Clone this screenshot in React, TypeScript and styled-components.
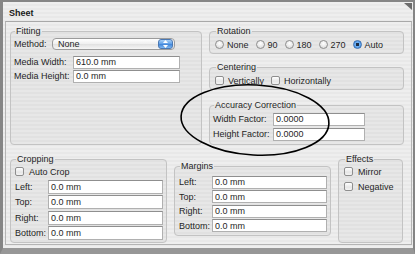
import React from 'react'
import styled, { createGlobalStyle } from 'styled-components'

const GlobalStyle = createGlobalStyle`
  html, body {
    margin: 0;
    padding: 0;
    background: #ffffff;
  }
  body {
    font-family: "Liberation Sans", Arial, sans-serif;
    font-size: 9px;
    color: #1f1f1f;
  }
  * { box-sizing: border-box; }
`

const stripes = `repeating-linear-gradient(to bottom, #eeeeee 0px, #eeeeee 2px, #e8e8e8 2px, #e8e8e8 4px)`

const App = () => {
  return (
    <>
      <GlobalStyle />
      <Window>
        <TitleBar>
          Sheet
          <Grip width="8" height="7" viewBox="0 0 8 7">
            <polygon points="0,0 8,0 8,7" fill="#6c6c6c" />
          </Grip>
        </TitleBar>
        <Panel>
          <TopRow>
            <Group $pad="1px 3px 3px 3px">
              <Caption>Fitting</Caption>
              <Row $h={12} $mb={6}>
                <FieldLabel $w={38}>Method:</FieldLabel>
                <Select>
                  <SelectText>None</SelectText>
                  <Stepper>
                    <svg width="5" height="8" viewBox="0 0 5 8">
                      <polygon points="2.5,0 5,3 0,3" fill="#ffffff" />
                      <polygon points="0,5 5,5 2.5,8" fill="#ffffff" />
                    </svg>
                  </Stepper>
                </Select>
              </Row>
              <Row $h={13} $mb={1}>
                <FieldLabel $w={59}>Media Width:</FieldLabel>
                <TextField $w={107}>610.0 mm</TextField>
              </Row>
              <Row $h={13}>
                <FieldLabel $w={59}>Media Height:</FieldLabel>
                <TextField $w={107}>0.0 mm</TextField>
              </Row>
            </Group>

            <RightCol>
              <Group $pad="2px 5px 2px 5px">
                <Caption>Rotation</Caption>
                <Row $h={12}>
                  <Choice><Radio />None</Choice>
                  <Choice><Radio />90</Choice>
                  <Choice><Radio />180</Choice>
                  <Choice><Radio />270</Choice>
                  <Choice><Radio $on />Auto</Choice>
                </Row>
              </Group>
              <Group $pad="2px 5px 2px 5px" $mt={8}>
                <Caption>Centering</Caption>
                <Row $h={12}>
                  <Choice $gap={4}><Box />Vertically</Choice>
                  <Choice $gap={4}><Box />Horizontally</Choice>
                </Row>
              </Group>
              <Group $pad="2px 3px 3px 3px" $mt={10}>
                <Caption>Accuracy Correction</Caption>
                <Row $h={13} $mb={2}>
                  <FieldLabel $w={60}>Width Factor:</FieldLabel>
                  <TextField $w={92}>0.0000</TextField>
                </Row>
                <Row $h={13}>
                  <FieldLabel $w={60}>Height Factor:</FieldLabel>
                  <TextField $w={92}>0.0000</TextField>
                </Row>
              </Group>
            </RightCol>
          </TopRow>

          <BottomRow>
            <Group $pad="2px 3px 2px 4px">
              <Caption>Cropping</Caption>
              <Row $h={10} $mb={3}>
                <Choice $gap={5}><Box />Auto Crop</Choice>
              </Row>
              {['Left:', 'Top:', 'Right:', 'Bottom:'].map((l, i) => (
                <Row key={l} $h={14} $mb={i < 3 ? 1.5 : 0}>
                  <FieldLabel $w={33}>{l}</FieldLabel>
                  <TextField $w={115}>0.0 mm</TextField>
                </Row>
              ))}
            </Group>

            <Group $pad="4px 3px 3px 4px">
              <Caption>Margins</Caption>
              {['Left:', 'Top:', 'Right:', 'Bottom:'].map((l, i) => (
                <Row key={l} $h={13} $mb={i < 3 ? 1.5 : 0}>
                  <FieldLabel $w={33}>{l}</FieldLabel>
                  <TextField $w={116}>0.0 mm</TextField>
                </Row>
              ))}
            </Group>

            <Group $pad="1px 3px 2px 5px" $stretch>
              <Caption>Effects</Caption>
              <Row $h={12} $mb={3}>
                <Choice $gap={5}><Box />Mirror</Choice>
              </Row>
              <Row $h={12}>
                <Choice $gap={5}><Box />Negative</Choice>
              </Row>
            </Group>
          </BottomRow>
        </Panel>

        <Callout width="415" height="257" viewBox="0 0 415 257">
          <ellipse
            cx="255"
            cy="120"
            rx="74"
            ry="35"
            transform="rotate(3 255 120)"
            fill="none"
            stroke="#000000"
            strokeWidth="1.6"
          />
        </Callout>
      </Window>
    </>
  )
}

export default App

const Callout = styled.svg`
    position: absolute;
    left: -3px;
    top: -2px;
    pointer-events: none;
`
const Box = styled.span`
    width: 9px;
    height: 9px;
    flex: none;
    border: 1px solid #8e8e8e;
    border-radius: 2px;
    background: linear-gradient(to bottom, #ffffff, #e6e6e6 60%, #f4f4f4);
`
const Radio = styled.span<{ $on?: boolean }>`
    width: 9px;
    height: 9px;
    flex: none;
    border-radius: 50%;
    border: 1px solid ${p => (p.$on ? '#3a6fb0' : '#8e8e8e')};
    background: ${p =>
      p.$on
        ? 'radial-gradient(circle at 50% 50%, #1b2c44 0 1.6px, #6fb0f2 2px, #3c86dc 100%)'
        : 'radial-gradient(circle at 50% 35%, #ffffff, #e2e2e2 70%, #cfcfcf)'};
`
const Choice = styled.label<{ $gap?: number }>`
    display: flex;
    align-items: center;
    gap: ${p => p.$gap ?? 3}px;
    margin-right: 7px;
    white-space: nowrap;
`
const Stepper = styled.span`
    width: 15px;
    height: 10px;
    margin-right: 1px;
    border-radius: 3px;
    display: flex;
    align-items: center;
    justify-content: center;
    background: linear-gradient(to bottom, #a9d0f7, #5b9de6 50%, #3c82d8 50%, #7fb8f0);
    border: 1px solid #4a78b3;
`
const SelectText = styled.span`
    flex: 1;
    padding-left: 5px;
`
const Select = styled.div`
    width: 123px;
    height: 12px;
    display: flex;
    align-items: center;
    border: 1px solid #9b9b9b;
    border-radius: 4px;
    background: linear-gradient(to bottom, #ffffff, #efefef 50%, #e0e0e0 50%, #f6f6f6);
`
const TextField = styled.div<{ $w: number }>`
    width: ${p => p.$w}px;
    height: 100%;
    display: flex;
    align-items: center;
    padding-left: 2px;
    background: #ffffff;
    border: 1px solid #b0b0b0;
    border-top-color: #8f8f8f;
`
const FieldLabel = styled.span<{ $w: number }>`
    width: ${p => p.$w}px;
    flex: none;
    white-space: nowrap;
`
const Row = styled.div<{ $h: number; $mb?: number }>`
    display: flex;
    align-items: center;
    height: ${p => p.$h}px;
    margin-bottom: ${p => p.$mb ?? 0}px;
`
const Caption = styled.legend`
    padding: 0 1px;
    margin-left: 1px;
    font-size: 9px;
    line-height: 11px;
    color: #262626;
`
const Group = styled.fieldset<{ $pad: string; $mt?: number; $stretch?: boolean }>`
    margin: ${p => p.$mt ?? 0}px 0 0 0;
    padding: ${p => p.$pad};
    min-width: 0;
    border: 1px solid #c3c3c3;
    border-radius: 4px;
    background: rgba(0, 0, 0, 0.028);
    align-self: ${p => (p.$stretch ? 'stretch' : 'auto')};
`
const BottomRow = styled.div`
    display: grid;
    grid-template-columns: 157px 157px 65px;
    column-gap: 7px;
    align-items: center;
    margin-top: 9px;
`
const RightCol = styled.div`
    display: flex;
    flex-direction: column;
`
const TopRow = styled.div`
    display: grid;
    grid-template-columns: 192px 195px;
    column-gap: 7px;
`
const Panel = styled.div`
    flex: 1;
    display: flex;
    flex-direction: column;
    border: 1px solid #b4b4b4;
    border-top-color: #a8a8a8;
    padding: 4px 7px 1px 4px;
`
const Grip = styled.svg`
    position: absolute;
    top: 1px;
    right: 0;
`
const TitleBar = styled.div`
    position: relative;
    height: 19px;
    padding: 6px 0 0 4px;
    font-weight: bold;
    line-height: 11px;
    color: #1a1a1a;
`
const Window = styled.div`
    position: relative;
    width: 415px;
    height: 254px;
    display: flex;
    flex-direction: column;
    border: 2px solid #858585;
    border-left-width: 3px;
    border-bottom: 6px solid #979797;
    padding: 0 1px 3px 2px;
    background: ${stripes};
`
